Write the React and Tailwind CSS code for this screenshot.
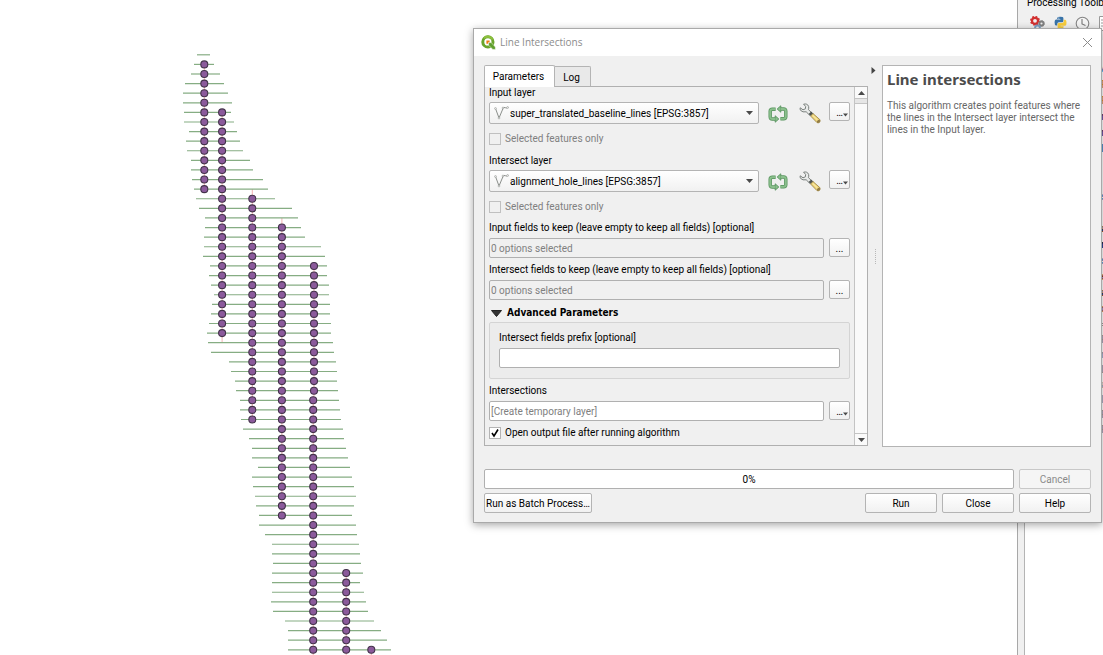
const hatches = [
  [197, 210], [194, 214], [191, 220], [185, 224], [183, 228], [183, 232], [184, 231], [184, 234],
  [189, 237], [186, 240], [187, 243], [191, 250], [191, 253], [192, 263], [194, 268], [196, 275],
  [199, 292], [205, 298], [205, 301], [204, 305], [204, 321], [203, 325], [210, 327], [209, 327],
  [211, 329], [214, 329], [212, 330], [211, 330], [209, 331], [207, 331], [208, 333], [211, 334],
  [229, 336], [231, 337], [235, 337], [236, 338], [240, 339], [240, 340], [241, 341], [243, 343],
  [249, 344], [252, 346], [252, 348], [258, 350], [252, 352], [253, 354], [255, 356], [256, 354],
  [259, 352], [259, 356], [265, 357], [272, 359], [272, 360], [273, 361], [272, 363], [272, 360],
  [272, 364], [271, 366], [273, 368], [285, 374], [288, 381], [288, 387], [288, 391],
];

const columns = [
  { x: 204.3, from: 1, to: 14, top: 64, bottom: 189 },
  { x: 222.1, from: 6, to: 29, top: 112, bottom: 343 },
  { x: 252.3, from: 15, to: 38, top: 189, bottom: 420 },
  { x: 281.9, from: 18, to: 48, top: 218, bottom: 516 },
  { x: 314, from: 22, to: 35, top: 266, bottom: 396 },
  { x: 313.2, from: 36, to: 62, top: 396, bottom: 655 },
  { x: 346.2, from: 54, to: 62, top: 573, bottom: 655 },
  { x: 371.3, from: 62, to: 62, top: 650, bottom: 655 },
];

const rowY = (n) => 54.8 + n * 9.597;

function MapCanvas() {
  return (
    <svg width="420" height="655" className="block" aria-label="Map canvas">
      {columns.map((c) => (
        <line key={c.x} x1={c.x} x2={c.x} y1={c.top} y2={c.bottom} stroke="#f3b3b3" strokeWidth="1" />
      ))}
      {hatches.map(([a, b], n) => (
        <line key={n} x1={a} x2={b} y1={rowY(n)} y2={rowY(n)} stroke="#86ad83" strokeWidth="1.2" />
      ))}
      {columns.map((c) =>
        Array.from({ length: c.to - c.from + 1 }, (_, i) => (
          <circle key={c.x + "-" + i} cx={c.x} cy={rowY(c.from + i)} r="3.5" fill="#8b5a9b" stroke="#43324a" strokeWidth="1.1" />
        ))
      )}
    </svg>
  );
}

function QgisLogo() {
  return (
    <svg width="15" height="15" viewBox="0 0 15 15" aria-hidden="true">
      <circle cx="6.9" cy="6.9" r="5.1" fill="none" stroke="#6aa52c" strokeWidth="3" />
      <path d="M3 3.4A5.1 5.1 0 0 1 11.5 4.6" fill="none" stroke="#8dc03e" strokeWidth="2.2" />
      <path d="M7.6 7.6h2.6l4.2 4.4V14.4h-2.6L7.6 10.2z" fill="#5f9f2e" stroke="#fff" strokeWidth=".5" />
      <path d="M5.4 5.4h3.2v1.8h-1.4v1.5H5.4z" fill="#ee7913" />
    </svg>
  );
}

function LineLayerIcon() {
  return (
    <svg width="15" height="14" viewBox="0 0 15 14" className="pointer-events-none absolute left-[5px] top-1" aria-hidden="true">
      <path d="M1.5 2.5L5 12L9 2.5Q10 0.8 11.3 1.7T14 1.2" fill="none" stroke="#8b8f8b" strokeWidth="1" />
      <g fill="#fff" stroke="#8b8f8b" strokeWidth=".6">
        <circle cx="1.5" cy="2.5" r=".9" /><circle cx="5" cy="12" r=".9" /><circle cx="9" cy="2" r=".9" /><circle cx="13.6" cy="1.5" r=".9" />
      </g>
    </svg>
  );
}

function IterateIcon() {
  const left = "M7.6 4.2H4.4Q2.2 4.2 2.2 6.2V11.8Q2.2 14 4.4 14H7.4";
  const right = "M12.4 13.8H15.6Q17.8 13.8 17.8 11.8V6.2Q17.8 4 15.6 4H12.6";
  return (
    <svg width="20" height="18" viewBox="0 0 20 18" aria-hidden="true">
      <g fill="none" stroke="#56935c" strokeWidth="3.4">
        <path d={left} />
        <path d={right} />
      </g>
      <path d="M12.8 .8L9.2 4L12.8 7.2z" fill="#8abf8c" stroke="#56935c" strokeWidth=".9" />
      <path d="M7.2 10.8L10.8 14L7.2 17.2z" fill="#8abf8c" stroke="#56935c" strokeWidth=".9" />
      <g fill="none" stroke="#8abf8c" strokeWidth="2">
        <path d={left} />
        <path d={right} />
      </g>
    </svg>
  );
}

function WrenchIcon() {
  return (
    <svg width="22" height="21" viewBox="0 0 22 21" aria-hidden="true">
      <path d="M4.6 1.2Q8.4 .2 9.6 3.4Q10 5.4 9.4 6.6L13 10L10.6 12.2L7.2 8.8Q3.6 9.6 1.6 7.4Q.8 6.2 1.2 4.8L4 6.8L6.4 5.8L6.6 3.4z" fill="#e9ebea" stroke="#7a807d" strokeWidth="1" strokeLinejoin="round" />
      <path d="M9.6 11L12.2 8.6L14.4 10.8L12 13.2z" fill="#4f5452" />
      <path d="M11.6 13L14 10.6L20.8 16.6Q21.6 18 20.6 19.2Q19.4 20.2 18 19.6z" fill="#efd67c" stroke="#a08a4b" strokeWidth=".9" />
      <path d="M18 19.6Q17.2 17.4 20.4 16.4L21 17.4Q21.4 18.6 20.4 19.4Q19.2 20.2 18 19.6z" fill="#927c45" />
      <path d="M13.8 12.4L18.4 16.8" stroke="#fff2b5" strokeWidth="1" />
    </svg>
  );
}

function Caret({ className, size = 7 }) {
  return (
    <svg width={size} height="4" viewBox="0 0 7 4" className={className} aria-hidden="true">
      <path d="M0 0h7L3.5 4z" fill="#4a4a4a" />
    </svg>
  );
}

const btn = "rounded-[2px] border border-[#b4b4b4] bg-linear-to-b from-white to-[#f1f1f1] text-black";

function MoreButton({ label, menu }) {
  return (
    <button aria-label={label} className={"relative ml-auto h-[19px] w-[21px] shrink-0 leading-[19px] " + btn}>
      {menu ? "…" : "..."}
      {menu && <Caret size={5} className="absolute bottom-[3px] right-px" />}
    </button>
  );
}

function LayerRow({ id, label, value, className }) {
  return (
    <div className={className}>
      <label htmlFor={id} className="block h-3 leading-[11px]">{label}</label>
      <div className="mt-[3px] flex h-[22px] items-start">
        <div className="relative mr-[9px] min-w-0 flex-1">
          <select id={id} className={"block h-[22px] w-full appearance-none pl-5 pt-px " + btn}>
            <option>{value}</option>
          </select>
          <LineLayerIcon />
          <Caret className="pointer-events-none absolute right-[6px] top-[9px]" />
        </div>
        <button aria-label="Iterate over this layer" className="mr-[11px] mt-[3px] shrink-0"><IterateIcon /></button>
        <button aria-label="Advanced options" className="mr-2 mt-px shrink-0"><WrenchIcon /></button>
        <MoreButton label={"Browse " + label} menu />
      </div>
      <label className="mt-[9px] flex h-3 items-center gap-1 leading-[14px] text-[#808080]">
        <input type="checkbox" disabled className="size-3 appearance-none border border-[#c0c0c0] bg-[#f0f0f0]" />
        Selected features only
      </label>
    </div>
  );
}

function FieldRow({ id, label, value, className, readOnly, menu }) {
  return (
    <div className={className}>
      <label htmlFor={id} className="block h-3 leading-[14px]">{label}</label>
      <div className="mt-[5px] flex gap-[5px]">
        <input
          id={id}
          readOnly={readOnly}
          defaultValue={readOnly ? value : undefined}
          placeholder={readOnly ? undefined : value}
          className={"h-5 min-w-0 flex-1 rounded-[2px] border border-[#b0b0b0] px-px pt-px text-[#808080] placeholder:text-[#808080] " + (readOnly ? "bg-[#f0f0f0]" : "bg-white")}
        />
        <MoreButton label={"Browse " + label} menu={menu} />
      </div>
    </div>
  );
}

function Dialog() {
  return (
    <section role="dialog" aria-label="Line Intersections" className="absolute right-px top-7 flex w-[629px] flex-col border border-[#a9a9a9] bg-[#f0f0f0] shadow-[0_2px_8px_rgba(0,0,0,0.35)]">
      <header className="flex h-[27px] items-center bg-white pl-[7px] pr-2">
        <QgisLogo />
        <h1 className="ml-1 flex-1 pb-[2px] font-['Open_Sans',sans-serif] text-[10px] text-[#8c8c8c]">Line Intersections</h1>
        <button aria-label="Close window">
          <svg width="11" height="11" viewBox="0 0 11 11"><path d="M1 1l9 9M10 1l-9 9" stroke="#8c8c8c" fill="none" /></svg>
        </button>
      </header>

      <div className="flex px-[10px] pt-[9px]">
        <div className="min-w-0 flex-1">
          <div role="tablist" className="flex h-[21px] items-end">
            <button role="tab" aria-selected="true" className="relative -mb-px h-[22px] w-[71px] rounded-t-[2px] border border-b-0 border-[#b4b4b4] bg-white pr-[2px] pt-px">Parameters</button>
            <button role="tab" aria-selected="false" className="h-5 w-9 rounded-tr-[2px] border border-b-0 border-l-0 border-[#b4b4b4] bg-[#e9e9e9] pr-[2px] pt-[2px]">Log</button>
          </div>
          <div className="flex h-[360px] border border-[#b0b0b0]">
            <div className="min-w-0 flex-1 overflow-hidden pl-1 pr-1">
              <LayerRow id="input" label="Input layer" value="super_translated_baseline_lines [EPSG:3857]" />
              <LayerRow id="intersect" label="Intersect layer" value="alignment_hole_lines [EPSG:3857]" className="mt-[10px]" />
              <FieldRow id="inputFields" label="Input fields to keep (leave empty to keep all fields) [optional]" value="0 options selected" readOnly className="mt-2" />
              <FieldRow id="intersectFields" label="Intersect fields to keep (leave empty to keep all fields) [optional]" value="0 options selected" readOnly className="mt-[5px]" />
              <button className="mt-[7px] flex h-3 items-center gap-[5px] pl-[2px] font-['DejaVu_Sans_Condensed','DejaVu_Sans',sans-serif] font-bold">
                <svg width="11" height="7" viewBox="0 0 11 7" aria-hidden="true"><path d="M.5 .5h10L5.5 6.5z" fill="#333" stroke="#222" /></svg>
                Advanced Parameters
              </button>
              <div className="mt-[3px] h-[57px] rounded-[2px] border border-[#d4d4d4] bg-[#ececec] px-[9px] pt-[9px]">
                <label htmlFor="prefix" className="block">Intersect fields prefix [optional]</label>
                <input id="prefix" className="mt-1 h-5 w-full rounded-[2px] border border-[#b0b0b0] bg-white px-1" />
              </div>
              <FieldRow id="output" label="Intersections" value="[Create temporary layer]" menu className="mt-[5px]" />
              <label className="mt-[6px] flex h-3 items-center gap-1 leading-[14px]">
                <span className="relative flex">
                  <input type="checkbox" defaultChecked className="size-3 appearance-none border border-[#b4b4b4] bg-white" />
                  <svg width="12" height="12" viewBox="0 0 12 12" className="pointer-events-none absolute inset-0" aria-hidden="true"><path d="M3 6l2 3l4-6.5" fill="none" stroke="#000" strokeWidth="1.6" /></svg>
                </span>
                Open output file after running algorithm
              </label>
            </div>
            <div className="flex w-[13px] flex-col border-l border-[#c4c4c4] bg-[#fafafa]">
              <div className="flex h-3 items-center justify-center border-b border-[#c4c4c4]"><Caret className="rotate-180" /></div>
              <div className="h-[5px] border-b border-[#c4c4c4] bg-[#e6e6e6]" />
              <div className="mt-auto flex h-3 items-center justify-center border-t border-[#c4c4c4]"><Caret /></div>
            </div>
          </div>
        </div>

        <div className="flex w-[14px] flex-col items-center">
          <svg width="5" height="7" viewBox="0 0 5 7" className="mr-[3px] mt-[2px]" aria-hidden="true"><path d="M.5 0L4.5 3.5L.5 7z" fill="#444" /></svg>
          <div className="mt-[175px] h-[15px] border-l border-dotted border-[#b8b8b8]" />
        </div>

        <article className="h-[382px] w-[209px] border border-[#b4b4b4] bg-white px-1 pt-1">
          <h2 className="font-['Noto_Sans',sans-serif] text-[15px] font-bold leading-[18px] text-[#4c4c4c]">Line intersections</h2>
          <p className="mt-3 leading-3 text-[#666]">This algorithm creates point features where the lines in the Intersect layer intersect the lines in the Input layer.</p>
        </article>
      </div>

      <footer className="mt-[22px] grid grid-cols-[1fr_72px] gap-x-[5px] gap-y-1 px-[10px] pb-[9px]">
        <div role="progressbar" aria-label="Progress" aria-valuenow={0} className="flex h-5 items-center justify-center rounded-[2px] border border-[#b0b0b0] bg-white pt-px">0%</div>
        <button disabled className="h-5 rounded-[2px] border border-[#c8c8c8] bg-[#f5f5f5] pt-px text-[#8a8a8a]">Cancel</button>
        <div className="flex gap-[5px]">
          <button className={"mr-auto h-5 w-[108px] whitespace-nowrap pt-px " + btn}>Run as Batch Process…</button>
          <button className={"h-5 w-18 pt-px " + btn}>Run</button>
          <button className={"h-5 w-18 pt-px " + btn}>Close</button>
        </div>
        <button className={"h-5 pt-px " + btn}>Help</button>
      </footer>
    </section>
  );
}

const treeMarks = [
  ["A", "text-[#3d7fc0]"], ["R", "text-[#d8932f]"], ["R", "text-[#d8932f]"], ["n", "text-[#5b1a40]"], ["m", "text-[#5b1a40]"], ["l", "text-[#2c79a8]"],
  ["", ""], ["", ""], ["s", "text-[#3d7fc0]"], ["", ""], ["a", "text-black"], ["n", "text-black"], ["s", "text-[#3d7fc0]"], ["e", "text-[#8c3e10]"],
  ["a", "text-black"], ["c", "text-[#8c3e10]"],
];

function ToolboxPanel() {
  return (
    <aside className="flex w-[86px] shrink-0 flex-col overflow-hidden border-l border-[#a8a8a8] bg-[#f0f0f0]">
      <h2 className="h-2 whitespace-nowrap pl-[9px] text-[10px] leading-[5px]">Processing Toolbox</h2>
      <div className="flex h-8 shrink-0 items-start gap-2 pl-3 pt-2">
        <svg width="16" height="15" viewBox="0 0 16 15" className="shrink-0" aria-label="Models">
          <circle cx="5" cy="4.8" r="3" fill="none" stroke="#d23030" strokeWidth="2.2" />
          <circle cx="5" cy="4.8" r="4.2" fill="none" stroke="#d23030" strokeWidth="1.6" strokeDasharray="1.7 1.6" />
          <circle cx="11.5" cy="7.5" r="2" fill="none" stroke="#808080" strokeWidth="1.8" />
          <circle cx="11.5" cy="7.5" r="3" fill="none" stroke="#808080" strokeWidth="1" strokeDasharray="1.2 1.1" />
          <circle cx="7.5" cy="12" r="2.4" fill="none" stroke="#7a9fc4" strokeWidth="2" />
        </svg>
        <svg width="13" height="13" viewBox="0 0 13 13" className="shrink-0" aria-label="Python">
          <path d="M3.2 3V2Q3.2 .8 6.3 .8T9.4 2.2V5Q9.4 6.3 8 6.3H4.8Q3.3 6.3 3.3 8V9.4H2Q.6 9.4 .6 6.4T2.2 3.4H6.4V3z" fill="#3973a8" />
          <path d="M9.8 3.8H11Q12.5 3.8 12.5 6.8T11 9.8H6.6v.4H9.6V11Q9.6 12.6 6.5 12.6T3.6 11V8.4Q3.6 7 5 7H8Q9.8 7 9.8 5.2z" fill="#f7cc3d" />
          <circle cx="4.8" cy="2" r=".6" fill="#fff" />
        </svg>
        <svg width="15" height="15" viewBox="0 0 15 15" className="shrink-0" aria-label="History">
          <circle cx="7.5" cy="7.5" r="6.3" fill="#f4f4f4" stroke="#858585" strokeWidth="1.1" />
          <path d="M7 3v5l3.5 1.5" fill="none" stroke="#777" strokeWidth="1.1" />
        </svg>
        <svg width="12" height="15" viewBox="0 0 12 15" className="ml-px shrink-0" aria-label="Results">
          <path d="M.5 .5h10v14H.5zM2 4h6M2 7h6M2 10h6" fill="#fff" stroke="#999" />
        </svg>
      </div>
      <ul className="ml-[6px] flex-1 border-l border-[#b4b4b4] bg-white pl-[76px] pt-[21px] text-[11px]">
        {treeMarks.map(([t, color], i) => (
          <li key={i} className={"h-4 leading-4 " + color}>{t}</li>
        ))}
        {["=", "F", "r", "L", "a", "l", "F", "F"].map((t, i) => (
          <li key={"g" + i} className="h-[15px] leading-[15px] text-[#999]">{t}</li>
        ))}
      </ul>
    </aside>
  );
}

export default function App() {
  return (
    <main className="relative flex h-screen overflow-hidden bg-white font-['Roboto',sans-serif] text-[10px] leading-3 text-black">
      <div className="min-w-0 flex-1 overflow-hidden"><MapCanvas /></div>
      <ToolboxPanel />
      <Dialog />
    </main>
  );
}
